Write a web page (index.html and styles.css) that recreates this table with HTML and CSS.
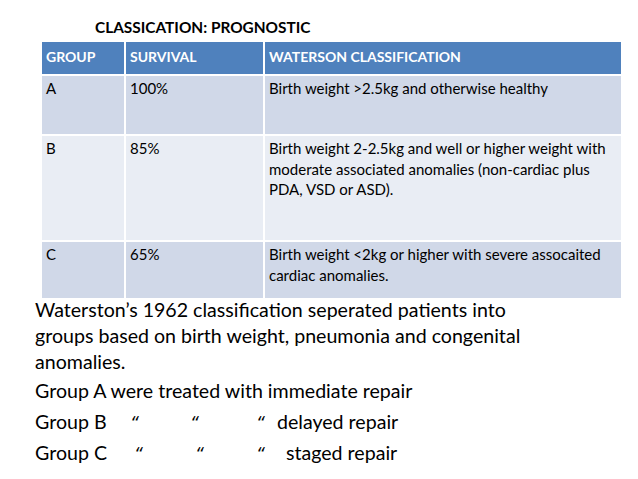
FILE: index.html
```html
<!DOCTYPE html>
<html>
<head>
<meta charset="utf-8">
<link rel="stylesheet" href="styles.css">
</head>
<body>
<div class="slide">
  <h1 class="title">CLASSICATION: PROGNOSTIC</h1>
  <table class="grid">
    <colgroup>
      <col class="c1"><col class="c2"><col class="c3">
    </colgroup>
    <thead>
      <tr class="head"><th>GROUP</th><th>SURVIVAL</th><th>WATERSON CLASSIFICATION</th></tr>
    </thead>
    <tbody>
      <tr class="row-a"><td>A</td><td>100%</td><td>Birth weight &gt;2.5kg and otherwise healthy</td></tr>
      <tr class="row-b"><td>B</td><td>85%</td><td>Birth weight 2-2.5kg and well or higher weight with<br>moderate associated anomalies (non-cardiac plus<br>PDA, VSD or ASD).</td></tr>
      <tr class="row-c"><td>C</td><td>65%</td><td>Birth weight &lt;2kg or higher with severe assocaited<br>cardiac anomalies.</td></tr>
    </tbody>
  </table>
  <div class="notes">
    <p class="para">Waterston’s 1962 classification seperated patients into<br>groups based on birth weight, pneumonia and congenital<br>anomalies.</p>
    <p class="para tight">Group A were treated with immediate repair</p>
    <p class="para"><span class="grp">Group B</span><span class="q q1">“</span><span class="q q2">“</span><span class="q q3">“</span><span class="rest">delayed repair</span></p>
    <p class="para"><span class="grp grpc">Group C</span><span class="q q1c">“</span><span class="q q2c">“</span><span class="q q3c">“</span><span class="rest">staged repair</span></p>
  </div>
</div>
</body>
</html>
```

FILE: styles.css
```css
html, body {
  margin: 0;
  padding: 0;
  background: #ffffff;
}
.slide {
  width: 638px;
  height: 479px;
  overflow: hidden;
  font-family: Lato, "Open Sans", sans-serif;
  color: #000;
}
.title {
  margin: 0 0 0 95px;
  padding-top: 17px;
  height: 23px;
  font-size: 15.4px;
  line-height: 20px;
  font-weight: bold;
  white-space: nowrap;
}
.grid {
  margin-left: 40px;
  border-collapse: separate;
  border-spacing: 2px;
  table-layout: fixed;
  width: 583px;
  font-size: 15px;
  line-height: 20.5px;
}
.c1 { width: 82px; }
.c2 { width: 137px; }
.c3 { width: 356px; }
.grid th, .grid td {
  text-align: left;
  vertical-align: top;
  padding: 2px 4px 0 4px;
  white-space: nowrap;
}
.head th {
  background: #4f81bd;
  color: #fff;
  font-weight: bold;
  font-size: 14px;
  padding-top: 5px;
  height: 32px;
  box-sizing: border-box;
}
.row-a td { background: #d0d8e8; height: 58px; box-sizing: border-box; }
.row-b td { background: #e9edf4; height: 104px; box-sizing: border-box; }
.row-c td { background: #d0d8e8; height: 56px; box-sizing: border-box; }
.notes {
  margin-left: 35px;
  margin-top: -8px;
  font-size: 19.6px;
}
.para {
  margin: 5px 0 0 0;
  line-height: 26px;
  white-space: nowrap;
}
.para.tight { margin-top: 3px; }
.q {
  display: inline-block;
  font-family: "DejaVu Sans", sans-serif;
  font-style: italic;
  font-size: 17px;
  line-height: 20px;
  vertical-align: baseline;
}
.grp { display: inline-block; width: 95px; }
.grp.grpc { width: 99px; }
.q1 { width: 60px; }
.q2 { width: 66px; }
.q3 { width: 21px; }
.q1c { width: 61px; }
.q2c { width: 61px; }
.q3c { width: 30px; }
```
